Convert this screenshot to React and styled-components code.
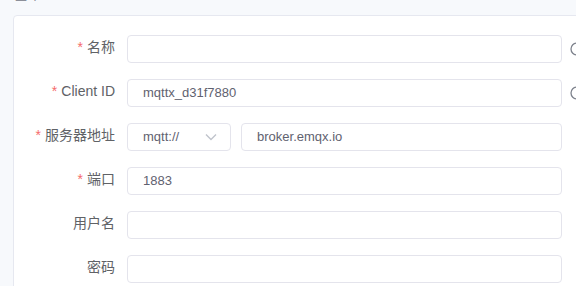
import React from "react";
import styled, { createGlobalStyle } from "styled-components";

const Global = createGlobalStyle`
  html, body { margin: 0; padding: 0; background: #f7f9fc; overflow: hidden; }
  body { font-family: "Liberation Sans", "Noto Sans CJK SC", sans-serif; }
`;

const Page = styled.div`
  margin-top: -16px;
  padding-left: 13px;
  width: 640px;
`;

const Heading = styled.div`
  font-size: 14px;
  line-height: 20px;
  height: 20px;
  color: #8c8f99;
  padding-left: 1px;
  margin-bottom: 11px;
`;

const Card = styled.div`
  background: #ffffff;
  border: 1px solid #e6e8f0;
  border-radius: 4px;
  padding: 19px 0 20px 0;
  display: flex;
  flex-direction: column;
  gap: 16px;
`;

const Row = styled.div`
  display: flex;
  align-items: flex-start;
  height: 28px;
`;

const Label = styled.label`
  width: 101px;
  padding-right: 12px;
  text-align: right;
  font-size: 14px;
  line-height: 24px;
  color: #606266;
  flex-shrink: 0;
`;

const Star = styled.span`
  color: #f56c6c;
  margin-right: 4px;
`;

const Field = styled.div`
  width: 435px;
  display: flex;
  gap: 10px;
  flex-shrink: 0;
`;

const Input = styled.div`
  box-sizing: border-box;
  height: 28px;
  width: ${(p) => p.$w || "100%"};
  flex: ${(p) => (p.$w ? "0 0 auto" : "1 1 auto")};
  border: 1px solid #e4e4ec;
  border-radius: 4px;
  padding: 0 13px 2px 15px;
  display: flex;
  align-items: center;
  justify-content: space-between;
  font-size: 13px;
  color: #5f6270;
`;

const Side = styled.div`
  margin-left: 8px;
  height: 28px;
  display: flex;
  align-items: center;
`;

const Chevron = () => (
  <svg width="12" height="8" viewBox="0 0 12 8" style={{ marginTop: 2 }}>
    <path d="M1 1.5 L6 6.5 L11 1.5" fill="none" stroke="#c0c4cc" strokeWidth="1.4" />
  </svg>
);

const HelpIcon = () => (
  <svg width="14" height="14" viewBox="0 0 14 14">
    <circle cx="7" cy="7" r="6" fill="none" stroke="#7d828c" strokeWidth="1.3" />
  </svg>
);

export default function App() {
  return (
    <>
      <Global />
      <Page>
        <Heading>基本</Heading>
        <Card>
          <Row>
            <Label><Star>*</Star>名称</Label>
            <Field><Input /></Field>
            <Side><HelpIcon /></Side>
          </Row>
          <Row>
            <Label><Star>*</Star>Client ID</Label>
            <Field><Input>mqttx_d31f7880</Input></Field>
            <Side><HelpIcon /></Side>
          </Row>
          <Row>
            <Label><Star>*</Star>服务器地址</Label>
            <Field>
              <Input $w="104px">mqtt://<Chevron /></Input>
              <Input>broker.emqx.io</Input>
            </Field>
          </Row>
          <Row>
            <Label><Star>*</Star>端口</Label>
            <Field><Input>1883</Input></Field>
          </Row>
          <Row>
            <Label>用户名</Label>
            <Field><Input /></Field>
          </Row>
          <Row>
            <Label>密码</Label>
            <Field><Input /></Field>
          </Row>
        </Card>
      </Page>
    </>
  );
}
